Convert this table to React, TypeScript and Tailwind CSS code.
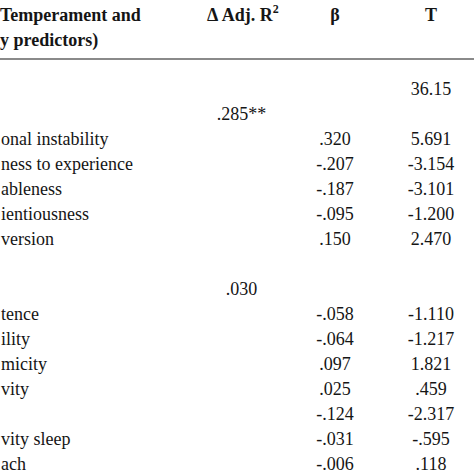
import React from "react";

type Row = { label: string; r2?: string; beta?: string; t?: string };

const rows: Row[] = [
  { label: "", t: "36.15" },
  { label: "", r2: ".285**" },
  { label: "onal instability", beta: ".320", t: "5.691" },
  { label: "ness to experience", beta: "-.207", t: "-3.154" },
  { label: "ableness", beta: "-.187", t: "-3.101" },
  { label: "ientiousness", beta: "-.095", t: "-1.200" },
  { label: "version", beta: ".150", t: "2.470" },
  { label: "" },
  { label: "", r2: ".030" },
  { label: "tence", beta: "-.058", t: "-1.110" },
  { label: "ility", beta: "-.064", t: "-1.217" },
  { label: "micity", beta: ".097", t: "1.821" },
  { label: "vity", beta: ".025", t: ".459" },
  { label: "", beta: "-.124", t: "-2.317" },
  { label: "vity sleep", beta: "-.031", t: "-.595" },
  { label: "ach", beta: "-.006", t: ".118" },
];

const cols = "grid grid-cols-[195px_93px_94px_98px]";

export default function App() {
  return (
    <div
      className="w-[474px] h-[474px] overflow-hidden bg-white text-[#151515]"
      style={{ fontFamily: '"Liberation Serif", "Times New Roman", serif' }}
    >
      <div className="w-[480px]">
        <div className={`${cols} pt-[3px] text-[18px] font-bold leading-[25px]`}>
          <div>
            <div>Temperament and</div>
            <div>y predictors)</div>
          </div>
          <div className="pl-[12px] whitespace-nowrap">
            Δ Adj. R<sup className="relative top-[-8px] text-[12px]">2</sup>
          </div>
          <div className="text-center">β</div>
          <div className="text-center">T</div>
        </div>
        <div className="mt-[5px] h-[2px] bg-[#8a8a8a]" />
        <div className="pt-[17px] text-[18px] leading-[25px]">
          {rows.map((r, i) => (
            <div key={i} className={`${cols} h-[25px] items-center`}>
              <div className="whitespace-nowrap pl-[1px]">{r.label}</div>
              <div className="text-center">{r.r2}</div>
              <div className="text-center">{r.beta}</div>
              <div className="text-center">{r.t}</div>
            </div>
          ))}
        </div>
      </div>
    </div>
  );
}
